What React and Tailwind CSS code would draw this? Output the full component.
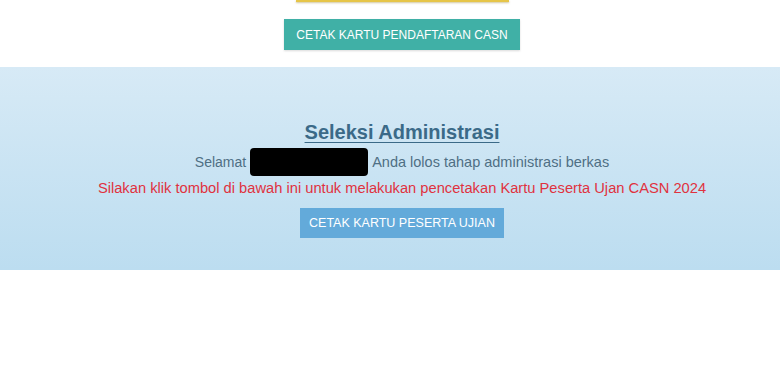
export default function App() {
  return (
    <div className="w-[780px] h-[390px] bg-white overflow-hidden" style={{ fontFamily: '"Liberation Sans", Arial, sans-serif' }}>
      <div className="flex justify-center pl-[24px]">
        <div className="w-[213px] h-[2px] bg-[#e6c548] shadow-[0_1px_2px_rgba(160,140,60,0.5)]" />
      </div>
      <div className="flex justify-center pl-[24px] pt-[17px]">
        <div className="w-[236px] h-[31px] bg-[#40b0a6] text-white text-[12px] tracking-[0px] flex items-center justify-center shadow-[0_1px_2px_rgba(0,0,0,0.15)]">
          CETAK KARTU PENDAFTARAN CASN
        </div>
      </div>
      <div className="mt-[17px] h-[203px] bg-gradient-to-b from-[#d7eaf6] to-[#bcddf0] flex flex-col items-center pl-[24px] pt-[53px]">
        <div className="text-[20px] leading-[24px] font-bold text-[#3b6a88] underline underline-offset-[3px] decoration-[1px]">
          Seleksi Administrasi
        </div>
        <div className="mt-[4px] flex items-center text-[14px] leading-[24px] text-[#4f6f84]">
          <span>Selamat</span>
          <span className="ml-[4px] mr-[4px] inline-block w-[118px] h-[28px] bg-black rounded-[4px]" />
          <span className="text-[14.5px]">Anda lolos tahap administrasi berkas</span>
        </div>
        <div className="mt-[2px] text-[14.7px] leading-[20px] text-[#e0323f]">
          Silakan klik tombol di bawah ini untuk melakukan pencetakan Kartu Peserta Ujan CASN 2024
        </div>
        <div className="mt-[10px] w-[204px] h-[30px] bg-[#63aada] text-white text-[12.5px] tracking-[0px] flex items-center justify-center">
          CETAK KARTU PESERTA UJIAN
        </div>
      </div>
    </div>
  );
}
